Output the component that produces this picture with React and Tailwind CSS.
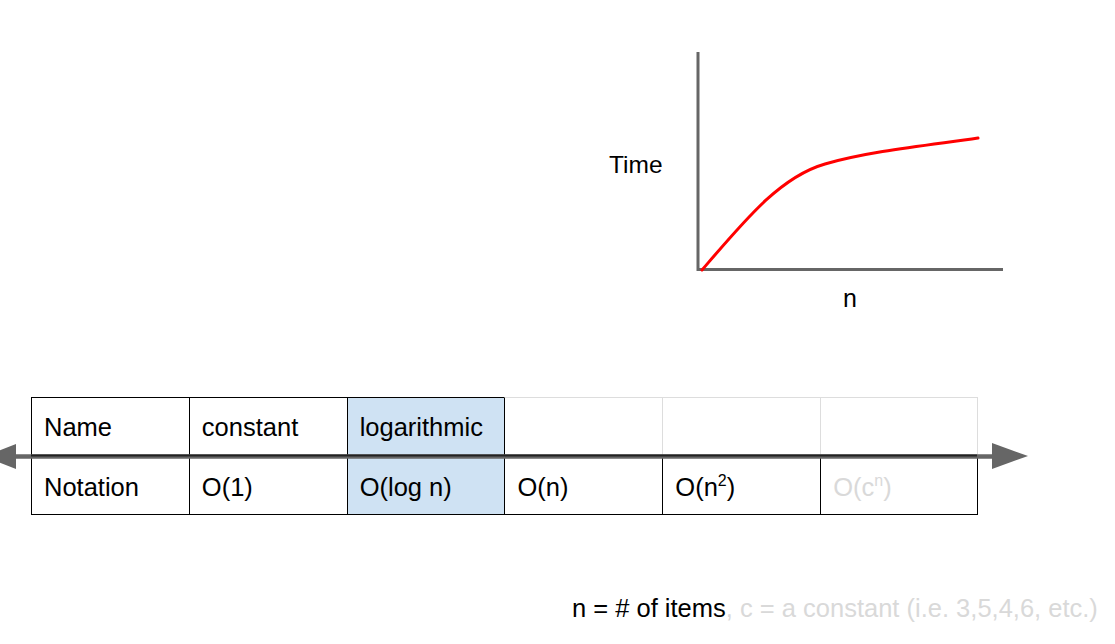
const cellBase = 'flex items-center pl-3 text-[25.5px] leading-none';

const TimeChart = () => (
  <svg width="310" height="222" viewBox="0 0 310 222" className="block">
    {/* axes */}
    <path d="M3 2 L3 219.5 L308 219.5" fill="none" stroke="#666666" strokeWidth="3" />
    {/* log curve */}
    <path
      d="M7 220 C50 170 85 127 130 114 S235 95 283 88"
      fill="none"
      stroke="#ff0000"
      strokeWidth="3"
      strokeLinecap="round"
    />
  </svg>
);

const Arrow = () => (
  <svg
    className="absolute left-0 top-0 pointer-events-none"
    width="1115"
    height="644"
    viewBox="0 0 1115 644"
  >
    <line x1="10" y1="456.5" x2="996" y2="456.5" stroke="#666666" strokeWidth="4.5" />
    <line x1="31" y1="455.5" x2="977" y2="455.5" stroke="#222222" strokeWidth="2" />
    <polygon points="16,444 16,469 -16,456.5" fill="#666666" />
    <polygon points="992,443 992,469 1028,456" fill="#666666" />
  </svg>
);

export default function App() {
  return (
    <div
      className="relative w-[1115px] h-[644px] overflow-hidden bg-white text-black"
      style={{ fontFamily: '"Liberation Sans", Arial, sans-serif' }}
    >
      {/* ====== Chart ====== */}
      <div className="flex h-[397px] pl-[609px] pt-[50px]">
        <div className="w-[86px] pt-[101px] text-[24.5px] leading-[28px]">Time</div>
        <div className="flex flex-col">
          <TimeChart />
          <div className="pl-[148px] mt-[12px] text-[25px] leading-[28px]">n</div>
        </div>
      </div>

      {/* ====== Table ====== */}
      <div className="ml-[31px] w-[947px] grid grid-cols-6">
        <div className={`${cellBase} h-[60px] border-t border-l border-black`}>Name</div>
        <div className={`${cellBase} h-[60px] border-t border-l border-black`}>constant</div>
        <div className={`${cellBase} h-[60px] border-t border-l border-black bg-[#cfe2f3]`}>logarithmic</div>
        <div className={`${cellBase} h-[60px] border-t border-l border-t-[#dddddd] border-l-black`}></div>
        <div className={`${cellBase} h-[60px] border-t border-l border-[#dddddd]`}></div>
        <div className={`${cellBase} h-[60px] border-t border-l border-r border-[#dddddd]`}></div>

        <div className={`${cellBase} h-[58px] pt-[3px] border-t border-l border-b border-black`}>Notation</div>
        <div className={`${cellBase} h-[58px] pt-[3px] border-t border-l border-b border-black`}>O(1)</div>
        <div className={`${cellBase} h-[58px] pt-[3px] border-t border-l border-b border-black bg-[#cfe2f3]`}>O(log n)</div>
        <div className={`${cellBase} h-[58px] pt-[3px] border-t border-l border-b border-black`}>O(n)</div>
        <div className={`${cellBase} h-[58px] pt-[3px] border-t border-l border-b border-black`}>
          O(n<sup className="text-[16px] relative -top-[7px]">2</sup>)
        </div>
        <div className={`${cellBase} h-[58px] pt-[3px] border-t border-l border-b border-r border-black text-[#d9d9d9]`}>
          O(c<sup className="text-[16px] relative -top-[7px]">n</sup>)
        </div>
      </div>

      {/* ====== Legend ====== */}
      <div className="pl-[572px] mt-[78px] text-[25.5px] leading-[30px] whitespace-nowrap">
        n = # of items<span className="text-[#d9d9d9]">, c = a constant (i.e. 3,5,4,6, etc.)</span>
      </div>

      <Arrow />
    </div>
  );
}
